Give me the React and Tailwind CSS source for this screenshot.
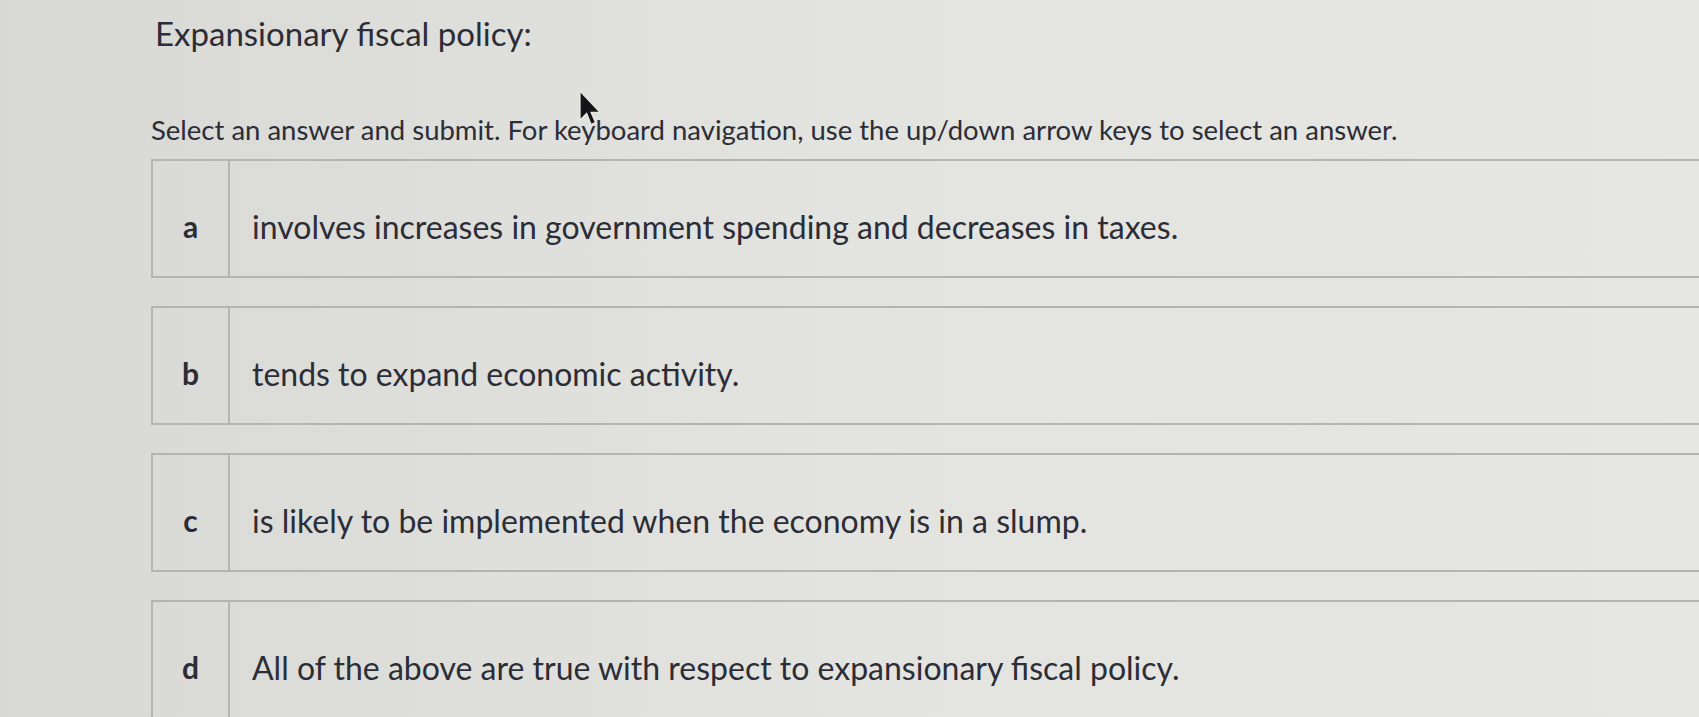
import React from "react";

const OPTIONS = [
  { key: "a", text: "involves increases in government spending and decreases in taxes." },
  { key: "b", text: "tends to expand economic activity." },
  { key: "c", text: "is likely to be implemented when the economy is in a slump." },
  { key: "d", text: "All of the above are true with respect to expansionary fiscal policy." },
];

function Cursor() {
  return (
    <svg
      className="absolute left-[577px] top-[90px]"
      width="26"
      height="38"
      viewBox="0 0 22 34"
    >
      <path d="M2 1 L2 27 L8 21 L12 31 L16 29 L12 20 L20 20 Z" fill="#151518" stroke="#e8e8e6" strokeWidth="1.2" />
    </svg>
  );
}

export default function App() {
  return (
    <div
      className="relative h-[717px] w-full overflow-hidden bg-gradient-to-r from-[#d8d9d5] via-[#e3e4e0] to-[#e6e6e2] text-[#2c2d37]"
      style={{ fontFamily: "Lato, 'Open Sans', sans-serif" }}
    >
      <div className="pl-[155px] pt-[13px]">
        <h1 className="text-[33px] leading-[40px] font-normal">Expansionary fiscal policy:</h1>
        <p className="mt-[62px] -ml-[4px] text-[27.5px] leading-[30px]">
          Select an answer and submit. For keyboard navigation, use the up/down arrow keys to select an answer.
        </p>
      </div>

      <div className="mt-[14px] flex flex-col gap-[28px] pl-[151px]">
        {OPTIONS.map((o) => (
          <div
            key={o.key}
            className="flex h-[119px] w-[1700px] border-2 border-[#b4b5b2]"
          >
            <div className="flex w-[77px] shrink-0 items-center justify-center border-r-2 border-[#b4b5b2] pt-[16px] text-[30px] font-bold">
              {o.key}
            </div>
            <div className="flex items-center pl-[22px] pt-[16px] text-[32px]">{o.text}</div>
          </div>
        ))}
      </div>

      <Cursor />
    </div>
  );
}
